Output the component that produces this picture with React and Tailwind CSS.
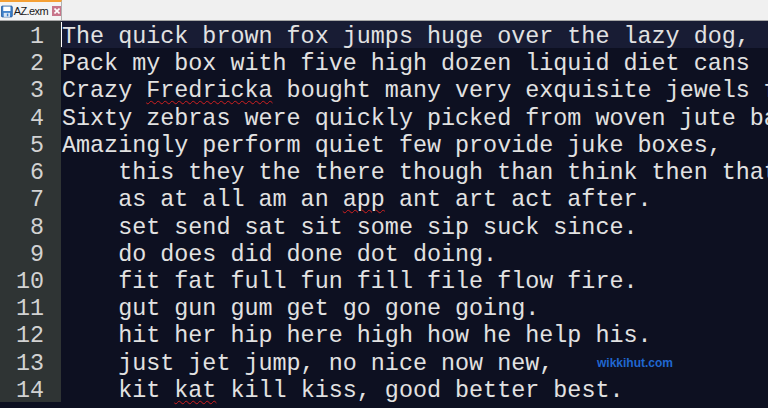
import React from 'react';

const lines = [
  ['The quick brown fox jumps huge over the lazy dog,'],
  ['Pack my box with five high dozen liquid diet cans'],
  ['Crazy ', { bad: 'Fredricka' }, ' bought many very exquisite jewels from'],
  ['Sixty zebras were quickly picked from woven jute bags'],
  ['Amazingly perform quiet few provide juke boxes,'],
  ['    this they the there though than think then that'],
  ['    as at all am an ', { bad: 'app' }, ' ant art act after.'],
  ['    set send sat sit some sip suck since.'],
  ['    do does did done dot doing.'],
  ['    fit fat full fun fill file flow fire.'],
  ['    gut gun gum get go gone going.'],
  ['    hit her hip here high how he help his.'],
  ['    just jet jump, no nice now new,'],
  ['    kit ', { bad: 'kat' }, ' kill kiss, good better best.'],
];

const FloppyIcon = () => (
  <svg width="13" height="13" viewBox="0 0 13 13">
    <rect x="0.5" y="0.5" width="12" height="12" rx="1" fill="#3d7fc9" stroke="#2a5f9e" />
    <rect x="2.5" y="1" width="8" height="5" fill="#ffffff" />
    <rect x="3" y="8" width="7" height="4.5" fill="#d8e6f5" />
    <rect x="6.5" y="8.8" width="1.6" height="3" fill="#3d7fc9" />
  </svg>
);

export default function App() {
  return (
    <div className="w-[768px] h-[408px] overflow-hidden flex flex-col bg-[#0d1021] relative">
      {/* tab bar */}
      <div className="h-[21px] bg-[#f0f0f0] border-b border-[#a8a8a8] flex items-end shrink-0">
        <div className="h-[20px] w-[62px] bg-[#f4f4f4] border-t-2 border-[#f5a035] border-r border-r-[#b0b0b0] flex items-center pl-[1px] gap-[1px]">
          <FloppyIcon />
          <span
            className="text-[11px] text-[#1a1a1a] tracking-[-0.6px] leading-none"
            style={{ fontFamily: '"Liberation Sans", Arial, sans-serif' }}
          >
            AZ.exm
          </span>
          <div className="ml-[3px] w-[10px] h-[10px] bg-[#c8758a] flex items-center justify-center">
            <svg width="6" height="6" viewBox="0 0 6 6">
              <path d="M0.5 0.5 L5.5 5.5 M5.5 0.5 L0.5 5.5" stroke="#ffffff" strokeWidth="1.6" />
            </svg>
          </div>
        </div>
      </div>

      {/* editor */}
      <div
        className="flex-1 flex flex-col"
        style={{ fontFamily: '"Liberation Mono", "Courier New", monospace' }}
      >
        {lines.map((parts, i) => (
          <div key={i} className="flex h-[27.23px] shrink-0">
            <div className="w-[61px] shrink-0 bg-[#2f3434] text-[#d2d2d2] text-[23.33px] leading-[27.23px] text-right pr-[17px] pt-[3px]">
              {i + 1}
            </div>
            <div
              className={`flex-1 relative whitespace-pre text-[#e2e2e2] text-[23.4px] leading-[27.23px] pl-[1px] pt-[3px] ${
                i === 0 ? 'bg-[#181c34]' : ''
              }`}
            >
              {i === 0 && <div className="absolute left-0 top-[1px] bottom-[1px] w-[1px] bg-white" />}
              {parts.map((p, j) =>
                typeof p === 'string' ? (
                  <span key={j}>{p}</span>
                ) : (
                  <span
                    key={j}
                    className="underline decoration-wavy decoration-[#d02020] decoration-[1px] underline-offset-[3px]"
                  >
                    {p.bad}
                  </span>
                )
              )}
            </div>
          </div>
        ))}
      </div>

      <div
        className="absolute left-[597px] top-[354px] text-[12px] font-bold text-[#2067d0]"
        style={{ fontFamily: '"Liberation Sans", Arial, sans-serif' }}
      >
        wikkihut.com
      </div>
    </div>
  );
}
